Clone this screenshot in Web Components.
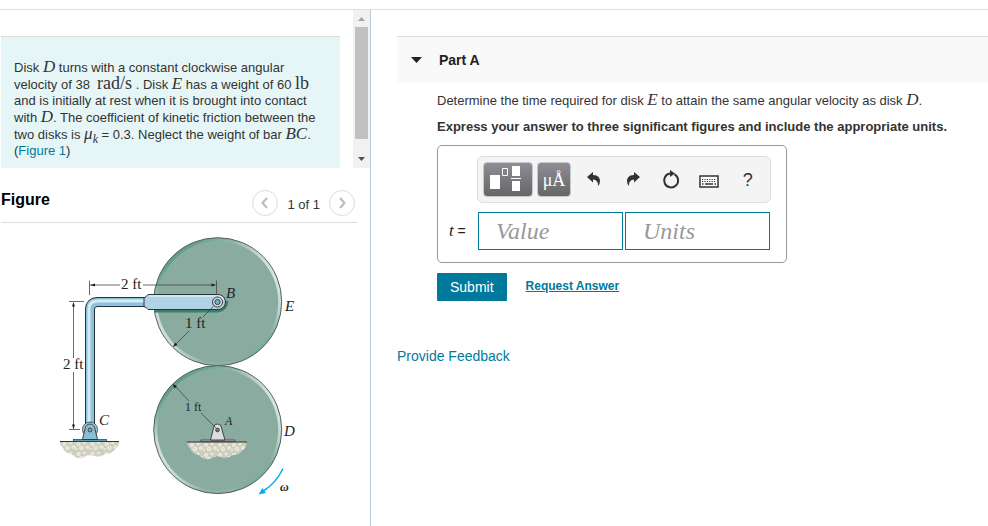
<!DOCTYPE html>
<html lang="en">
<head>
<meta charset="utf-8">
<title>Part A</title>
<style>
body {
  margin: 0;
  background: #fff;
  color: #333;
  font: 13px/16px "Liberation Sans", Arial, sans-serif;
}
</style>
</head>
<body>
<problem-layout>
  <problem-statement slot="left">
    <span>Disk </span><math-text var>D</math-text><span> turns with a constant clockwise angular velocity of 38&nbsp; </span><math-text>rad/s</math-text><span> . Disk </span><math-text var>E</math-text><span> has a weight of 60 </span><math-text>lb</math-text><span> and is initially at rest when it is brought into contact with </span><math-text var>D</math-text><span>. The coefficient of kinetic friction between the two disks is </span><math-text var>μ<span slot="sub">k</span></math-text><span> = 0.3. Neglect the weight of bar </span><math-text var>BC</math-text><span>. </span><span>(</span><a href="#figure">Figure 1</a><span>)</span>
  </problem-statement>
  <figure-viewer slot="left" id="figure">
    <disk-figure></disk-figure>
  </figure-viewer>
  <part-panel slot="right" heading="Part A">
    <span slot="question">Determine the time required for disk <math-text var>E</math-text> to attain the same angular velocity as disk <math-text var>D</math-text>.</span>
    <span slot="hint">Express your answer to three significant figures and include the appropriate units.</span>
    <answer-box></answer-box>
  </part-panel>
</problem-layout>

<script>
/**
 * Attaches an open shadow root filled with the given markup.
 *
 * @param {HTMLElement} element - The host.
 * @param {string} markup - Styles and markup of the host.
 */
function render (element, markup) {
  const template = document.createElement('template')
  template.innerHTML = markup.trim() // A trailing line break would show as a space in inline hosts.
  element.attachShadow({ mode: 'open' }).appendChild(template.content.cloneNode(true))
}

customElements.define('problem-layout',
  class extends HTMLElement {
    constructor () {
      super()
      render(this, `
<style>
:host {
  display: flex;
  flex-direction: column;
  min-height: 100vh;
  box-sizing: border-box;
  padding-top: 9px;
}

#columns {
  flex: 1;
  display: grid;
  grid-template-columns: minmax(0, 371px) minmax(0, 1fr);
  border-top: 1px solid #ddd;
}

aside {
  border-right: 1px solid #b9cbd8;
}

main {
  padding: 26px 0 0 26px;
}
</style>
<div id="columns">
  <aside><slot name="left"></slot></aside>
  <main><slot name="right"></slot></main>
</div>
`)
    }
  }
)

customElements.define('math-text',
  class extends HTMLElement {
    constructor () {
      super()
      render(this, `
<style>
:host {
  display: inline;
  font-family: "Liberation Serif", "Times New Roman", serif;
  font-size: 18px;
  line-height: 15px;
  white-space: nowrap;
}

:host([var]) {
  font-size: 17px;
  font-style: italic;
}

sub {
  font-size: 12px;
  line-height: 0;
}
</style><slot></slot><sub><slot name="sub"></slot></sub>
`)
    }
  }
)

customElements.define('problem-statement',
  class extends HTMLElement {
    constructor () {
      super()
      render(this, `
<style>
:host {
  display: flex;
  justify-content: space-between;
}

#text {
  flex: 0 1 313px;
  margin: 26px 13px 0 1px;
  padding: 22px 13px 9px;
  border-top: 1px solid #ddd;
  background: #e6f6f7;
}

::slotted(a) {
  color: #007a9c;
  text-decoration: none;
}

#scrollbar {
  flex: 0 0 17px;
  display: flex;
  flex-direction: column;
  align-items: center;
  background: #f1f1f1;
}

svg {
  display: block;
}

#thumb {
  width: 13px;
  flex: 1;
  background: #c1c1c1;
}

#track {
  height: 12px;
}
</style>
<div id="text"><slot></slot></div>
<div id="scrollbar">
  <svg width="17" height="17"><path d="M5 11 8.500 7 12 11Z" fill="#a3a3a3"/></svg>
  <div id="thumb"></div>
  <div id="track"></div>
  <svg width="17" height="17"><path d="M5 6 8.500 10 12 6Z" fill="#505050"/></svg>
</div>
`)
    }
  }
)

customElements.define('figure-viewer',
  class extends HTMLElement {
    constructor () {
      super()
      render(this, `
<style>
:host {
  display: block;
}

header {
  display: flex;
  align-items: center;
  gap: 9px;
  margin: 0 13px 0 1px;
  padding: 22px 2px 6px 0;
  border-bottom: 1px solid #ddd;
}

h2 {
  flex: 1;
  margin: 0;
  padding-bottom: 6px;
  color: #000;
  font-size: 16px;
  line-height: 20px;
}

header span {
  padding-top: 3px;
  font-size: 13px;
}

button {
  display: grid;
  place-items: center;
  width: 26px;
  height: 26px;
  padding: 0;
  border: 1px solid #ddd;
  border-radius: 50%;
  background: #fff;
}

path {
  fill: none;
  stroke: #bbb;
  stroke-width: 2;
}
</style>
<header>
  <h2>Figure</h2>
  <button type="button" aria-label="Previous figure"><svg width="12" height="12"><path d="M8 1 3.500 6 8 11"/></svg></button>
  <span>1 of 1</span>
  <button type="button" aria-label="Next figure"><svg width="12" height="12"><path d="M4 1 8.500 6 4 11"/></svg></button>
</header>
<slot></slot>
`)
    }
  }
)

customElements.define('disk-figure',
  class extends HTMLElement {
    constructor () {
      super()
      render(this, `
<style>
:host {
  display: block;
}

svg {
  display: block;
}

text {
  font-family: "Liberation Serif", "Times New Roman", serif;
  font-size: 15px;
  fill: #231f20;
}

.label {
  font-style: italic;
}

.small {
  font-size: 12px;
}

.dim {
  fill: none;
  stroke: #444;
  stroke-width: 0.8;
}

.head {
  fill: #231f20;
}
</style>
<svg width="330" height="300" viewBox="0 223 330 300" role="img" aria-label="Disk E on bar BC resting on disk D">
  <defs>
    <linearGradient id="rim" x1="0" y1="0.7" x2="1" y2="0.3">
      <stop offset="0" stop-color="#dcebe6"/>
      <stop offset="0.25" stop-color="#8db3a5"/>
      <stop offset="0.75" stop-color="#8db3a5"/>
      <stop offset="1" stop-color="#e4f0ec"/>
    </linearGradient>
    <linearGradient id="dark" x1="0.1" y1="0.1" x2="0.9" y2="0.9">
      <stop offset="0" stop-color="#4f9480"/>
      <stop offset="0.25" stop-color="#4f9480" stop-opacity="0"/>
      <stop offset="0.85" stop-color="#6aa794" stop-opacity="0"/>
      <stop offset="1" stop-color="#6aa794"/>
    </linearGradient>
    <pattern id="gravel" width="14" height="10" patternUnits="userSpaceOnUse">
      <rect width="14" height="10" fill="#cfcebe"/>
      <g fill="#dddccf" stroke="#f4f3ea" stroke-width="0.9">
        <circle cx="3" cy="3" r="1.500"/><circle cx="9" cy="2" r="1"/>
        <circle cx="12" cy="6" r="1.400"/><circle cx="6" cy="7" r="1.700"/><circle cx="1" cy="8" r="0.600"/>
      </g>
    </pattern>
    <g id="disk">
      <circle r="64" fill="url(#rim)"/>
      <circle r="64" fill="url(#dark)"/>
      <circle r="60.500" fill="#89aba0"/>
      <circle r="64" fill="none" stroke="#565f5c"/>
    </g>
    <path id="ground" d="M-29.500 0H29.500Q30 5 26 8Q22 13 16 13Q11 17 4 15Q-2 13-7 17Q-14 18-18 13Q-25 12-27 6Q-30 4-29.500 0Z" fill="url(#gravel)"/>
  </defs>

  <use href="#disk" x="217.700" y="301.700"/>
  <use href="#disk" x="217.700" y="429.600"/>

  <!-- bar BC -->
  <path d="M154 311H218Q226 310 227 301" fill="none" stroke="#3f7d6b" stroke-width="3"/>
  <path d="M90 424V310Q90 302 98 302H146" fill="none" stroke="#263238" stroke-width="10"/>
  <path d="M90 424V310Q90 302 98 302H146" fill="none" stroke="#8dc3da" stroke-width="8"/>
  <path d="M89 424V309Q89 301 98 301H144" fill="none" stroke="#d3ebf4" stroke-width="3"/>
  <path d="M144 298Q146 297 148 294.500H218A7.500 7.500 0 0 1 218 309.500H148Q146 307 144 306.500Z" fill="#b1d3e6" stroke="#29363d"/>
  <path d="M149 296H218A6 6 0 0 1 223 300" fill="none" stroke="#d9edf7" stroke-width="1.500"/>
  <circle cx="217.500" cy="302" r="5" fill="#e6e6e6" stroke="#333"/>
  <circle cx="217.500" cy="302" r="2.700" fill="#65b2d1" stroke="#333" stroke-width="0.900"/>

  <!-- support C -->
  <use href="#ground" x="89.500" y="441"/>
  <path d="M60 441.500H119" stroke="#333"/>
  <rect x="73.500" y="439.500" width="33" height="2" fill="#5f9db5" stroke="#263238" stroke-width="0.700"/>
  <circle cx="90" cy="429.500" r="7.500" fill="#a9d2e4" stroke="#333" stroke-width="0.800"/>
  <path d="M82.500 439.500 85 429A5 5 0 0 1 95 429L97.500 439.500Z" fill="#8bbfd5" stroke="#263238" stroke-width="0.900"/>
  <circle cx="90" cy="430" r="2" fill="#999" stroke="#333" stroke-width="0.800"/>

  <!-- support A -->
  <use href="#ground" x="217" y="442"/>
  <path d="M187 442H247" stroke="#333"/>
  <rect x="201" y="440" width="34" height="1.500" fill="#bbb" stroke="#333" stroke-width="0.700"/>
  <path d="M210.500 440 213.500 428A4 4 0 0 1 221.500 428L225 440Z" fill="#dcdde0" stroke="#333" stroke-width="0.900"/>
  <circle cx="217.500" cy="430" r="1.900" fill="#777" stroke="#333" stroke-width="0.700"/>

  <!-- dimension lines -->
  <path class="dim" d="M90 285H120M143 285H215M89.500 280.500V295M216.500 280.500V295"/>
  <path class="dim" d="M73.500 303V358M73.500 372V429M69 301.500H84M69 429.500H80"/>
  <path class="dim" d="M214 305.500 203 317M189 331 174 346M175 386 189 401M201 413 216 428"/>
  <path class="head" d="M90.500 285l4.500-1.500v3ZM216 285l-4.500-1.500v3ZM73.500 302l-1.500 4.500h3ZM73.500 429l-1.500-4.500h3ZM173 347l2-4.500 2.500 2.500ZM172.500 384l2 4.500 2.500-2.500Z"/>

  <text x="121" y="289">2 ft</text>
  <text x="63" y="369">2 ft</text>
  <text x="185" y="328">1 ft</text>
  <text class="small" x="185" y="411">1 ft</text>
  <text class="label" x="226" y="298">B</text>
  <text class="label" x="285" y="311">E</text>
  <text class="label" x="99" y="425">C</text>
  <text class="label small" x="225" y="425">A</text>
  <text class="label" x="284" y="436">D</text>
  <text class="label small" x="280" y="491" font-weight="bold">ω</text>

  <path d="M283 468.500Q276 483 264 490.500" fill="none" stroke="#00aeef" stroke-width="1.500"/>
  <path d="M258.500 494.500 262.500 488 266 493Z" fill="#00aeef"/>
</svg>
`)
    }
  }
)

customElements.define('part-panel',
  class extends HTMLElement {
    constructor () {
      super()
      render(this, `
<style>
:host {
  display: block;
}

header {
  display: flex;
  align-items: center;
  border-top: 1px solid #ddd;
  background: #f9f9f9;
}

header button {
  width: 42px;
  height: 46px;
  padding: 0 0 0 14px;
  border: 0;
  background: none;
  text-align: left;
}

header svg {
  display: block;
}

h2 {
  margin: 0;
  color: #222;
  font-size: 14px;
  line-height: 16px;
}

#body {
  padding: 9px 0 0 40px;
}

p {
  margin: 0 0 10px;
}

#hint {
  font-weight: bold;
}

#actions {
  display: flex;
  align-items: center;
  gap: 19px;
  margin-top: 10px;
}

#submit {
  height: 28px;
  padding: 0 13px;
  border: 0;
  border-radius: 1px;
  background: #007a9c;
  color: #fff;
  font: 14px/16px "Liberation Sans", Arial, sans-serif;
}

a {
  color: #007a9c;
}

#request {
  padding-bottom: 2px;
  font-size: 12px;
  font-weight: bold;
}

#feedback {
  display: inline-block;
  margin-top: 47px;
  font-size: 14px;
  text-decoration: none;
}
</style>
<header>
  <button type="button" aria-label="Collapse part"><svg width="11" height="6"><path d="M0 0H11L5.500 6Z" fill="#222"/></svg></button>
  <h2></h2>
</header>
<div id="body">
  <p><slot name="question"></slot></p>
  <p id="hint"><slot name="hint"></slot></p>
  <slot></slot>
  <div id="actions">
    <button type="button" id="submit">Submit</button>
    <a href="#answer" id="request">Request Answer</a>
  </div>
</div>
<a href="#feedback" id="feedback">Provide Feedback</a>
`)
    }

    connectedCallback () {
      this.shadowRoot.querySelector('h2').textContent = this.getAttribute('heading')
    }
  }
)

customElements.define('answer-box',
  class extends HTMLElement {
    constructor () {
      super()
      render(this, `
<style>
:host {
  display: block;
  box-sizing: border-box;
  max-width: 350px;
  padding: 10px 15px 12px 11px;
  border: 1px solid #999;
  border-radius: 5px;
}

#toolbar {
  display: flex;
  align-items: center;
  margin-left: 28px;
  padding: 5px 3px 5px 5px;
  border: 1px solid #ddd;
  border-radius: 6px;
  background: #f4f4f4;
}

button {
  display: grid;
  place-items: center;
  flex: 1;
  height: 35px;
  padding: 0;
  border: 0;
  background: none;
  color: #333;
  font: 18px/20px "Liberation Sans", Arial, sans-serif;
}

.dark {
  flex: 0 0 34px;
  margin-right: 4px;
  border: 1px solid #c8c8c8;
  border-radius: 4px;
  background: linear-gradient(#8f8d97, #666);
  color: #fff;
  font: 18px/20px "Liberation Serif", "Times New Roman", serif;
}

.wide {
  flex-basis: 50px;
}

#fields {
  display: flex;
  align-items: center;
  gap: 2px;
  margin: 9px 1px 0 0;
}

label {
  flex: 0 0 27px;
  color: #222;
  font-size: 14px;
}

i {
  font-family: "Liberation Serif", "Times New Roman", serif;
  font-size: 17px;
}

input {
  flex: 1;
  min-width: 0;
  height: 38px;
  box-sizing: border-box;
  padding: 0 17px;
  border: 1px solid #007a9c;
  background: #fff;
  font: italic 24px/28px "Liberation Serif", "Times New Roman", serif;
}

input::placeholder {
  color: #999;
  opacity: 1;
}
</style>
<div id="toolbar">
  <button type="button" class="dark wide" aria-label="Templates">
    <svg width="48" height="33">
      <path d="M6 12H16V26H6ZM28 3H36V13H28ZM27 15H37V16H27ZM28 18H36V28H28Z" fill="#fff"/>
      <path d="M18.500 5.500H23.500V12.500H18.500Z" fill="none" stroke="#fff"/>
    </svg>
  </button>
  <button type="button" class="dark">μÅ</button>
  <button type="button" aria-label="Undo">
    <svg width="16" height="18"><path d="M1 6 7 1V4C12 4 14 7 14 10Q14 13 12 15Q12.500 9 7 8.500V11.500Z" fill="#333"/></svg>
  </button>
  <button type="button" aria-label="Redo">
    <svg width="16" height="18"><path d="M15 6 9 1V4C4 4 2 7 2 10Q2 13 4 15Q3.500 9 9 8.500V11.500Z" fill="#333"/></svg>
  </button>
  <button type="button" aria-label="Reset">
    <svg width="18" height="20"><path d="M12.500 4.300A7 7 0 1 1 8 3.500" fill="none" stroke="#333" stroke-width="2"/><path d="M8 0 13 3.500 8 7Z" fill="#333"/></svg>
  </button>
  <button type="button" aria-label="Keyboard">
    <svg width="20" height="16">
      <rect x="1" y="4" width="18" height="11" fill="#fff" stroke="#333" stroke-width="1.500"/>
      <path d="M3 7.500H17M3 9.500H17" fill="none" stroke="#333" stroke-width="1.200" stroke-dasharray="1.200 1.200"/>
      <path d="M3 12H4.500M6 12H14M15.500 12H17" stroke="#333" stroke-width="1.300"/>
    </svg>
  </button>
  <button type="button">?</button>
</div>
<div id="fields">
  <label for="value"><i>t</i> =</label>
  <input id="value" type="text" placeholder="Value" autocomplete="off">
  <input id="units" type="text" placeholder="Units" aria-label="Units" autocomplete="off">
</div>
`)
    }
  }
)
</script>
</body>
</html>
